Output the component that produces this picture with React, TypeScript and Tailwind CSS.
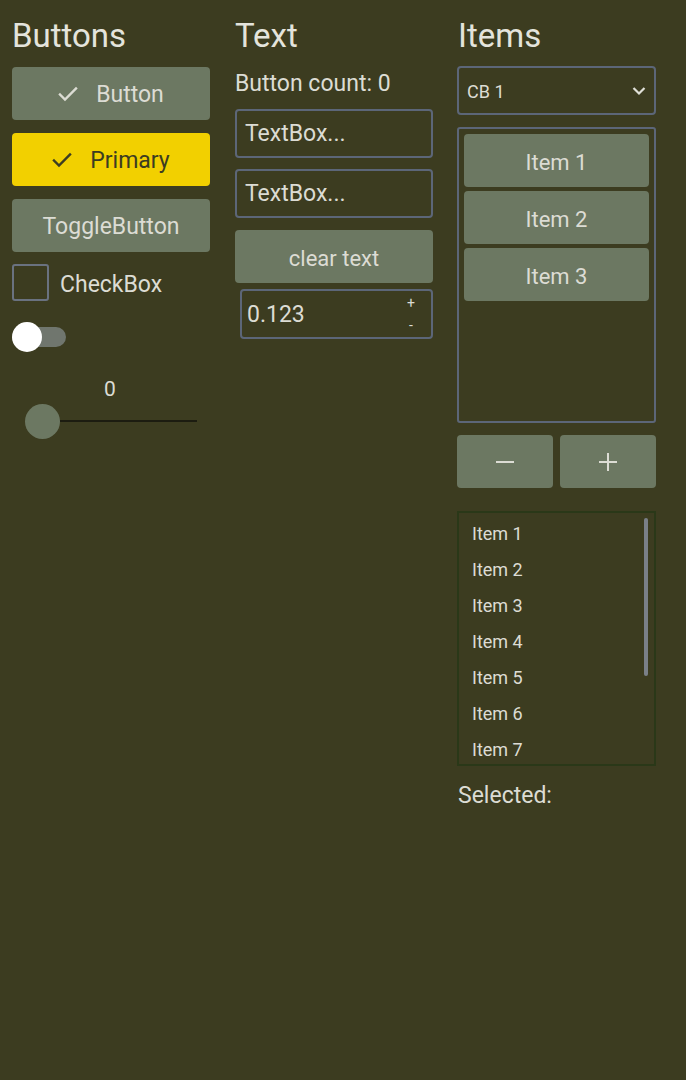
import React from "react";

const btn =
  "flex items-center justify-center rounded-[4px] bg-[#6c7862] text-[#dcdcd4] text-[23px] h-[53px] w-full pt-[3px]";

function Check({ color }: { color: string }) {
  return (
    <svg width="20" height="16" viewBox="0 0 20 16" fill="none" stroke={color} strokeWidth="2.4" strokeLinecap="square">
      <path d="M2 8.5 L7 13.5 L18 2.5" />
    </svg>
  );
}

export default function App() {
  const items = ["Item 1", "Item 2", "Item 3", "Item 4", "Item 5", "Item 6", "Item 7"];
  return (
    <div
      className="w-[686px] h-[1080px] bg-[#3c3c20] text-[#dcdcd4] flex pl-[12px]"
      style={{ fontFamily: "Roboto, 'Liberation Sans', sans-serif" }}
    >
      {/* Buttons column */}
      <div className="w-[198px] flex flex-col">
        <div className="text-[33px] leading-[40px] mt-[16px] text-[#e4e4dc]">Buttons</div>
        <div className="flex flex-col gap-[13px] mt-[11px]">
          <div className={btn}>
            <span className="mr-[18px] flex -mt-[3px]"><Check color="#dcdcd4" /></span>
            Button
          </div>
          <div className={btn + " !bg-[#f2d000] !text-[#3c3c22]"}>
            <span className="mr-[18px] flex -mt-[3px]"><Check color="#3c3c22" /></span>
            Primary
          </div>
          <div className={btn}>ToggleButton</div>
        </div>
        <div className="flex items-center mt-[12px] h-[37px]">
          <div className="w-[37px] h-[37px] border-2 border-[#6a7280] rounded-[3px]" />
          <span className="ml-[11px] text-[23px] pt-[5px]">CheckBox</span>
        </div>
        <div className="mt-[21px] relative w-[56px] h-[30px] flex items-center">
          <div className="w-[54px] h-[20px] rounded-full bg-[#70766e]" />
          <div className="absolute left-0 top-0 w-[30px] h-[30px] rounded-full bg-white" />
        </div>
        <div className="text-[21px] leading-[24px] mt-[25px] w-[198px] pl-[92px]">0</div>
        <div className="flex items-center mt-[2px] ml-[13px] h-[36px]">
          <div className="w-[35px] h-[35px] rounded-full bg-[#6c7862]" />
          <div className="w-[137px] h-[2px] bg-[#1c1c10]" />
        </div>
      </div>

      {/* Text column */}
      <div className="w-[198px] ml-[25px] flex flex-col">
        <div className="text-[33px] leading-[40px] mt-[16px] text-[#e4e4dc]">Text</div>
        <div className="text-[23px] leading-[26px] mt-[15px]">Button count: 0</div>
        <div className="mt-[12px] h-[49px] border-2 border-[#5c6678] rounded-[4px] flex items-center pl-[8px] pt-[2px] text-[23px]">
          TextBox...
        </div>
        <div className="mt-[11px] h-[49px] border-2 border-[#5c6678] rounded-[4px] flex items-center pl-[8px] pt-[2px] text-[23px]">
          TextBox...
        </div>
        <div className={btn + " mt-[12px] !text-[22px]"}>clear text</div>
        <div className="mt-[6px] ml-[5px] h-[50px] border-2 border-[#5c6678] rounded-[4px] flex items-center pl-[5px] pr-[16px] text-[23px]">
          <span className="flex-1 pt-[2px]">0.123</span>
          <div className="flex flex-col items-center text-[14px] leading-[22px]">
            <span>+</span>
            <span>-</span>
          </div>
        </div>
      </div>

      {/* Items column */}
      <div className="w-[199px] ml-[24px] flex flex-col">
        <div className="text-[33px] leading-[40px] mt-[16px] text-[#e4e4dc] pl-[1px]">Items</div>
        <div className="mt-[10px] h-[49px] border-2 border-[#5c6678] rounded-[4px] flex items-center pl-[8px] pr-[8px] text-[18px]">
          <span className="flex-1 pt-[2px]">CB 1</span>
          <svg width="14" height="10" viewBox="0 0 14 10" fill="none" stroke="#e0e0d8" strokeWidth="2.2">
            <path d="M1.5 2 L7 7.5 L12.5 2" />
          </svg>
        </div>
        <div className="mt-[12px] h-[296px] border-2 border-[#5c6678] rounded-[3px] p-[5px] flex flex-col gap-[4px]">
          <div className={btn + " !text-[22px]"}>Item 1</div>
          <div className={btn + " !text-[22px]"}>Item 2</div>
          <div className={btn + " !text-[22px]"}>Item 3</div>
        </div>
        <div className="mt-[12px] flex gap-[7px]">
          <div className={btn + " w-[96px] !pt-0"}>
            <span className="block w-[18px] h-[2px] bg-[#dcdcd4]" />
          </div>
          <div className={btn + " w-[96px] !pt-0"}>
            <svg width="18" height="18" viewBox="0 0 18 18" stroke="#dcdcd4" strokeWidth="2">
              <path d="M9 0 V18 M0 9 H18" />
            </svg>
          </div>
        </div>
        <div className="mt-[23px] h-[255px] border-2 border-[#2a3818] relative overflow-hidden">
          <div className="flex flex-col pt-[8px] pl-[13px]">
            {items.map((it) => (
              <div key={it} className="h-[36px] text-[18px] leading-[26px]">
                {it}
              </div>
            ))}
          </div>
          <div className="absolute right-[6px] top-[5px] w-[4px] h-[158px] rounded-full bg-[#7a8088]" />
        </div>
        <div className="mt-[13px] text-[23px] pl-[1px]">Selected:</div>
      </div>
    </div>
  );
}
